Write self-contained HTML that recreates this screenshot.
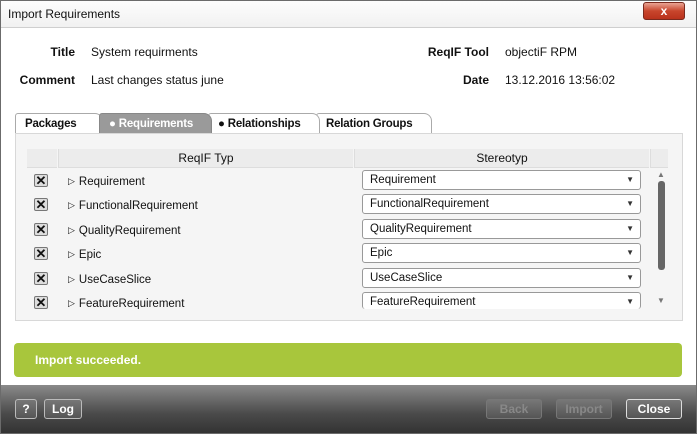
<!DOCTYPE html>
<html><head><style>
*{margin:0;padding:0;box-sizing:border-box}
body{width:697px;height:434px;overflow:hidden;font-family:"Liberation Sans",sans-serif;font-size:12px;color:#111;background:#fff;position:relative}
.abs{position:absolute}
.win{left:0;top:0;width:697px;height:434px;border:1px solid #6b6b6b;background:#fff}
.tbar{left:1px;top:1px;width:695px;height:27px;background:linear-gradient(#fdfdfd,#f1f1f1);border-bottom:1px solid #cfcfcf}
.xbtn{left:643px;top:2px;width:42px;height:18px;border-radius:3px;background:linear-gradient(#e9a393,#c8452c 50%,#b9321c);border:1px solid #7a2a1e;color:#fff;font-weight:bold;font-size:12px;text-align:center;line-height:16px}
.lbl{font-weight:bold;text-align:right}
.tab{top:113px;height:21px;border:1px solid #aaa;border-bottom:none;border-radius:3px 8px 0 0;background:#fff;font-weight:bold;font-size:11.5px;line-height:20px;padding-left:9px;white-space:nowrap;letter-spacing:-0.2px}
.panel{left:15px;top:133px;width:668px;height:188px;background:#f5f5f5;border:1px solid #d8d8d8}
.hdr{top:149px;height:19px;background:#ececec;border-bottom:1px solid #ddd;line-height:18px;text-align:center}
.cb{left:34px;width:14px;height:13px;border:1px solid #777;background:#ddd;border-radius:2px;font-weight:bold;font-size:13px;line-height:11px;text-align:center}
.sel{left:362px;width:279px;height:20px;border:1px solid #999;border-radius:3px;background:#fff;line-height:18px;padding-left:7px;font-size:11.5px}
.sel:after{content:"\25BC";position:absolute;right:6px;top:0;font-size:8px;color:#333}
.row{left:68px;font-size:11.5px;line-height:14px;margin-top:0}
.row span{font-size:9px;margin-right:4px;vertical-align:1px}
.btn{top:399px;height:20px;border:1px solid #bbb;border-radius:3px;color:#fff;font-weight:bold;text-align:center;line-height:18px;font-size:12px;background:linear-gradient(#777,#555)}
</style></head><body>
<div class="abs win"></div>
<div class="abs tbar"></div>
<div class="abs" style="left:8px;top:7px">Import Requirements</div>
<div class="abs xbtn">x</div>

<div class="abs lbl" style="left:20px;top:45px;width:55px">Title</div>
<div class="abs" style="left:91px;top:45px">System requirments</div>
<div class="abs lbl" style="left:5px;top:73px;width:70px">Comment</div>
<div class="abs" style="left:91px;top:73px">Last changes status june</div>
<div class="abs lbl" style="left:400px;top:45px;width:89px">ReqIF Tool</div>
<div class="abs" style="left:505px;top:45px">objectiF RPM</div>
<div class="abs lbl" style="left:400px;top:73px;width:89px">Date</div>
<div class="abs" style="left:505px;top:73px">13.12.2016 13:56:02</div>

<div class="abs tab" style="left:15px;width:88px">Packages</div>
<div class="abs tab" style="left:316px;width:116px">Relation Groups</div>
<div class="abs tab" style="left:208px;width:112px">● Relationships</div>
<div class="abs tab" style="left:99px;width:113px;background:#9a9a9a;color:#fff;border-color:#888">● Requirements</div>

<div class="abs panel"></div>
<div class="abs hdr" style="left:27px;width:30px"></div>
<div class="abs hdr" style="left:58px;width:295px;border-left:1px solid #ddd">ReqIF Typ</div>
<div class="abs hdr" style="left:354px;width:295px;border-left:1px solid #ddd">Stereotyp</div>
<div class="abs hdr" style="left:650px;width:18px;border-left:1px solid #ddd"></div>

<div class="abs cb" style="top:174px">✕</div><div class="abs row" style="top:174px"><span>▷</span>Requirement</div><div class="abs sel" style="top:170px">Requirement</div>
<div class="abs cb" style="top:198px">✕</div><div class="abs row" style="top:198px"><span>▷</span>FunctionalRequirement</div><div class="abs sel" style="top:194px">FunctionalRequirement</div>
<div class="abs cb" style="top:223px">✕</div><div class="abs row" style="top:223px"><span>▷</span>QualityRequirement</div><div class="abs sel" style="top:219px">QualityRequirement</div>
<div class="abs cb" style="top:247px">✕</div><div class="abs row" style="top:247px"><span>▷</span>Epic</div><div class="abs sel" style="top:243px">Epic</div>
<div class="abs cb" style="top:272px">✕</div><div class="abs row" style="top:272px"><span>▷</span>UseCaseSlice</div><div class="abs sel" style="top:268px">UseCaseSlice</div>
<div class="abs cb" style="top:296px">✕</div><div class="abs row" style="top:296px"><span>▷</span>FeatureRequirement</div><div class="abs sel" style="top:292px;height:17px;border-bottom:none">FeatureRequirement</div>
<div class="abs" style="left:16px;top:309px;width:666px;height:11px;background:#f5f5f5"></div>
<div class="abs" style="left:657px;top:170px;font-size:8px;color:#777">▲</div>
<div class="abs" style="left:658px;top:181px;width:7px;height:89px;background:#666;border-radius:3px"></div>
<div class="abs" style="left:657px;top:296px;font-size:8px;color:#777">▼</div>

<div class="abs" style="left:14px;top:343px;width:668px;height:34px;background:#a8c63c;border-radius:4px;color:#fff;font-weight:bold;line-height:34px;padding-left:21px">Import succeeded.</div>

<div class="abs" style="left:1px;top:385px;width:695px;height:48px;background:linear-gradient(#8a8a8a,#4a4a4a 60%,#333)"></div>
<div class="abs btn" style="left:15px;width:22px">?</div>
<div class="abs btn" style="left:44px;width:38px">Log</div>
<div class="abs btn" style="left:486px;width:56px;color:#888;border-color:#777">Back</div>
<div class="abs btn" style="left:556px;width:56px;color:#888;border-color:#777">Import</div>
<div class="abs btn" style="left:626px;width:56px;border-color:#ddd">Close</div>
</body></html>
